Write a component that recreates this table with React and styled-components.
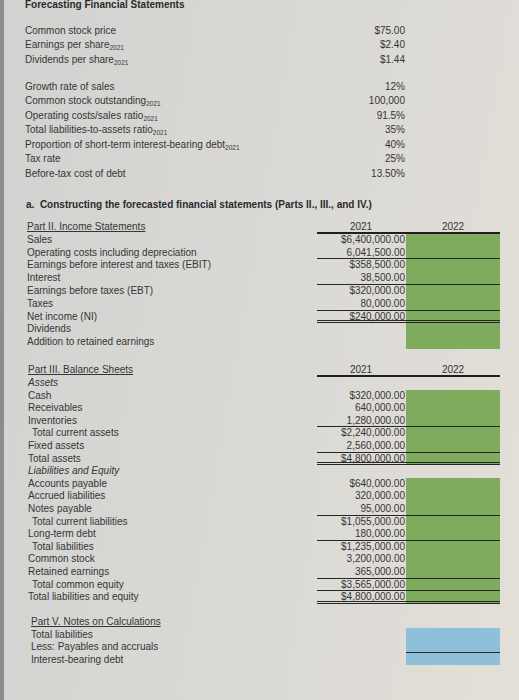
import React from 'react';
import styled, { createGlobalStyle, css } from 'styled-components';

const Global = createGlobalStyle`
  html, body {
    margin: 0;
    padding: 0;
    background: #d8d7d4;
  }
  body {
    font-family: "Liberation Sans", Arial, sans-serif;
    color: #353535;
  }
`;

const Page = styled.div`
  box-sizing: border-box;
  width: 519px;
  min-height: 700px;
  padding: 0 19px 0 26px;
  border-left: 4px solid #8c8c8c;
  background: linear-gradient(100deg, #d2d2d0 0%, #d9d8d5 45%, #e3dfd8 100%);
  font-size: 10px;
  overflow: hidden;
`;

const Title = styled.div`
  font-weight: bold;
  font-size: 10px;
  line-height: 12px;
  margin: -1px 0 0 -5px;
  color: #2b2b2b;
`;

const Heading = styled.div`
  font-weight: bold;
  font-size: 10px;
  line-height: 12px;
  margin: ${p => p.$top}px 0 0 -4px;
  color: #2b2b2b;
  white-space: pre;
`;

const Grid = styled.div`
  display: grid;
  grid-template-columns: 1fr 89px 94px;
  margin-top: ${p => p.$top}px;
`;

const ruleCss = {
  single: css`border-bottom: 1px solid #262626;`,
  thick: css`border-bottom: 2px solid #1f1f1f;`,
  double: css`border-bottom: 3px double #262626;`,
};

const Cell = styled.div`
  box-sizing: border-box;
  height: ${p => p.$h}px;
  line-height: ${p => p.$h - (p.$lift ?? 0)}px;
  white-space: nowrap;
`;

const Label = styled(Cell)`
  margin-left: ${p => p.$left}px;
  padding-left: ${p => (p.$indent ? 4 : 0)}px;
  font-style: ${p => (p.$italic ? 'italic' : 'normal')};
  text-decoration: ${p => (p.$under ? 'underline' : 'none')};
  text-underline-offset: 1px;
`;

const Num = styled(Cell)`
  text-align: ${p => (p.$center ? 'center' : 'right')};
  padding-right: 1px;
  ${p => p.$rule && ruleCss[p.$rule]}
`;

const fills = { green: '#7eab5c', blue: '#8ec1d9' };

const Fill = styled(Cell)`
  text-align: center;
  background: ${p => (p.$fill ? fills[p.$fill] : 'transparent')};
  ${p => p.$rule && ruleCss[p.$rule]}
`;

const Sub = styled.sub`
  font-size: 6.5px;
  vertical-align: -2px;
  line-height: 0;
`;

const y = <Sub>2021</Sub>;

const top1 = [
  ['Common stock price', '$75.00'],
  [<>Earnings per share{y}</>, '$2.40'],
  [<>Dividends per share{y}</>, '$1.44'],
];

const top2 = [
  ['Growth rate of sales', '12%'],
  [<>Common stock outstanding{y}</>, '100,000'],
  [<>Operating costs/sales ratio{y}</>, '91.5%'],
  [<>Total liabilities-to-assets ratio{y}</>, '35%'],
  [<>Proportion of short-term interest-bearing debt{y}</>, '40%'],
  ['Tax rate', '25%'],
  ['Before-tax cost of debt', '13.50%'],
];

const income = [
  { label: 'Part II. Income Statements', under: true, v: '2021', f: '2022', rule: 'thick', head: true },
  { label: 'Sales', v: '$6,400,000.00', fill: 'green' },
  { label: 'Operating costs including depreciation', v: '6,041,500.00', fill: 'green', rule: 'single' },
  { label: 'Earnings before interest and taxes (EBIT)', v: '$358,500.00', fill: 'green' },
  { label: 'Interest', v: '38,500.00', fill: 'green', rule: 'single' },
  { label: 'Earnings before taxes (EBT)', v: '$320,000.00', fill: 'green' },
  { label: 'Taxes', v: '80,000.00', fill: 'green', rule: 'single' },
  { label: 'Net income (NI)', v: '$240,000.00', fill: 'green', rule: 'double' },
  { label: 'Dividends', fill: 'green' },
  { label: 'Addition to retained earnings', fill: 'green' },
];

const balance = [
  { label: 'Part III. Balance Sheets', under: true, v: '2021', f: '2022', rule: 'thick', head: true },
  { label: 'Assets', italic: true },
  { label: 'Cash', v: '$320,000.00', fill: 'green' },
  { label: 'Receivables', v: '640,000.00', fill: 'green' },
  { label: 'Inventories', v: '1,280,000.00', fill: 'green', rule: 'single' },
  { label: 'Total current assets', indent: true, v: '$2,240,000.00', fill: 'green' },
  { label: 'Fixed assets', v: '2,560,000.00', fill: 'green', rule: 'single' },
  { label: 'Total assets', v: '$4,800,000.00', fill: 'green', rule: 'double' },
  { label: 'Liabilities and Equity', italic: true },
  { label: 'Accounts payable', v: '$640,000.00', fill: 'green' },
  { label: 'Accrued liabilities', v: '320,000.00', fill: 'green' },
  { label: 'Notes payable', v: '95,000.00', fill: 'green', rule: 'single' },
  { label: 'Total current liabilities', indent: true, v: '$1,055,000.00', fill: 'green' },
  { label: 'Long-term debt', v: '180,000.00', fill: 'green', rule: 'single' },
  { label: 'Total liabilities', indent: true, v: '$1,235,000.00', fill: 'green' },
  { label: 'Common stock', v: '3,200,000.00', fill: 'green' },
  { label: 'Retained earnings', v: '365,000.00', fill: 'green', rule: 'single' },
  { label: 'Total common equity', indent: true, v: '$3,565,000.00', fill: 'green', rule: 'single' },
  { label: 'Total liabilities and equity', v: '$4,800,000.00', fill: 'green', rule: 'double' },
];

const notes = [
  { label: 'Part V. Notes on Calculations', under: true },
  { label: 'Total liabilities', fill: 'blue' },
  { label: 'Less: Payables and accruals', fill: 'blue', fillRule: 'single' },
  { label: 'Interest-bearing debt', fill: 'blue' },
];

const Table = ({ rows, h, top, left = 0, lift = 1 }) => (
  <Grid $top={top}>
    {rows.map((r, i) => (
      <React.Fragment key={i}>
        <Label $h={h} $lift={lift} $left={left} $indent={r.indent} $italic={r.italic} $under={r.under}>
          {r.label}
        </Label>
        <Num $h={h} $lift={lift} $rule={r.rule} $center={r.head}>
          {r.v}
        </Num>
        <Fill $h={h} $lift={lift} $fill={r.fill} $rule={r.rule || r.fillRule}>
          {r.f}
        </Fill>
      </React.Fragment>
    ))}
  </Grid>
);

const Simple = ({ rows, top }) => (
  <Grid $top={top}>
    {rows.map(([label, v], i) => (
      <React.Fragment key={i}>
        <Label $h={14.5} $left={-5}>{label}</Label>
        <Num $h={14.5}>{v}</Num>
        <Fill $h={14.5} />
      </React.Fragment>
    ))}
  </Grid>
);

export default function App() {
  return (
    <>
      <Global />
      <Page>
        <Title>Forecasting Financial Statements</Title>
        <Simple rows={top1} top={12.75} />
        <Simple rows={top2} top={12.5} />
        <Heading $top={17.75}>{'a.  Constructing the forecasted financial statements (Parts II., III., and IV.)'}</Heading>
        <Table rows={income} h={12.8} top={10} left={-3} />
        <Table rows={balance} h={12.6} top={15.5} left={-2} />
        <Table rows={notes} h={12.5} top={11.5} left={1} lift={-1} />
      </Page>
    </>
  );
}
